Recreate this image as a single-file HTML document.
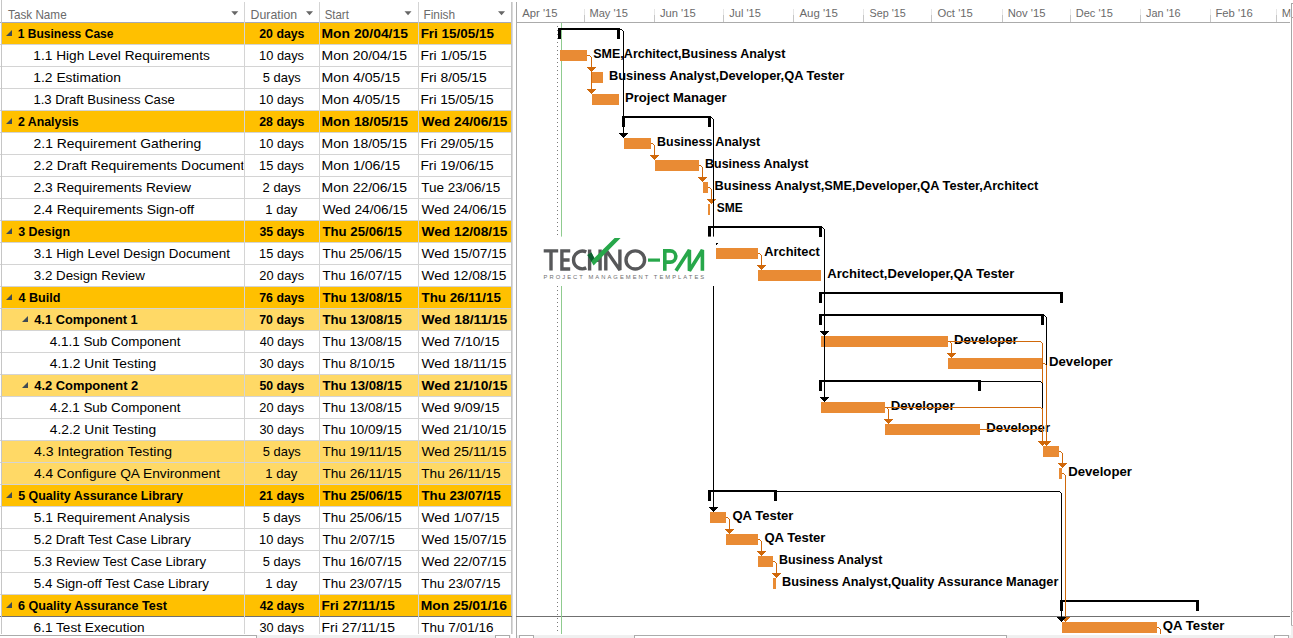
<!DOCTYPE html>
<html><head><meta charset="utf-8"><title>Gantt</title>
<style>html,body{margin:0;padding:0;background:#fff;}body{width:1293px;height:638px;overflow:hidden;}svg{display:block;}text{font-family:"Liberation Sans",sans-serif;white-space:pre;}</style>
</head><body>
<svg width="1293" height="638" viewBox="0 0 1293 638" font-family="Liberation Sans, sans-serif">
<defs><clipPath id="cn"><rect x="2" y="0" width="241.4" height="638"/></clipPath><clipPath id="cc"><rect x="517" y="0" width="773.4" height="638"/></clipPath></defs>
<rect x="0" y="0" width="1293" height="638" fill="#fff"/>
<g id="table" shape-rendering="crispEdges">
<rect x="2" y="22" width="509" height="22" fill="#FFC000"/>
<rect x="2" y="110" width="509" height="22" fill="#FFC000"/>
<rect x="2" y="220" width="509" height="22" fill="#FFC000"/>
<rect x="2" y="286" width="509" height="22" fill="#FFC000"/>
<rect x="2" y="308" width="509" height="22" fill="#FFD966"/>
<rect x="2" y="374" width="509" height="22" fill="#FFD966"/>
<rect x="2" y="440" width="509" height="22" fill="#FFD966"/>
<rect x="2" y="462" width="509" height="22" fill="#FFD966"/>
<rect x="2" y="484" width="509" height="22" fill="#FFC000"/>
<rect x="2" y="594" width="509" height="22" fill="#FFC000"/>
<rect x="0" y="22" width="511" height="1" fill="#A6A9B6"/>
<rect x="0" y="44" width="511" height="1" fill="#D4D4D4"/>
<rect x="0" y="66" width="511" height="1" fill="#D4D4D4"/>
<rect x="0" y="88" width="511" height="1" fill="#D4D4D4"/>
<rect x="0" y="110" width="511" height="1" fill="#D4D4D4"/>
<rect x="0" y="132" width="511" height="1" fill="#D4D4D4"/>
<rect x="0" y="154" width="511" height="1" fill="#D4D4D4"/>
<rect x="0" y="176" width="511" height="1" fill="#D4D4D4"/>
<rect x="0" y="198" width="511" height="1" fill="#D4D4D4"/>
<rect x="0" y="220" width="511" height="1" fill="#D4D4D4"/>
<rect x="0" y="242" width="511" height="1" fill="#D4D4D4"/>
<rect x="0" y="264" width="511" height="1" fill="#D4D4D4"/>
<rect x="0" y="286" width="511" height="1" fill="#D4D4D4"/>
<rect x="0" y="308" width="511" height="1" fill="#D4D4D4"/>
<rect x="0" y="330" width="511" height="1" fill="#D4D4D4"/>
<rect x="0" y="352" width="511" height="1" fill="#D4D4D4"/>
<rect x="0" y="374" width="511" height="1" fill="#D4D4D4"/>
<rect x="0" y="396" width="511" height="1" fill="#D4D4D4"/>
<rect x="0" y="418" width="511" height="1" fill="#D4D4D4"/>
<rect x="0" y="440" width="511" height="1" fill="#D4D4D4"/>
<rect x="0" y="462" width="511" height="1" fill="#D4D4D4"/>
<rect x="0" y="484" width="511" height="1" fill="#D4D4D4"/>
<rect x="0" y="506" width="511" height="1" fill="#D4D4D4"/>
<rect x="0" y="528" width="511" height="1" fill="#D4D4D4"/>
<rect x="0" y="550" width="511" height="1" fill="#D4D4D4"/>
<rect x="0" y="572" width="511" height="1" fill="#D4D4D4"/>
<rect x="0" y="594" width="511" height="1" fill="#D4D4D4"/>
<rect x="0" y="616" width="512" height="1" fill="#707070"/>
<rect x="0" y="638" width="511" height="1" fill="#D4D4D4"/>
<rect x="1" y="0" width="1" height="634" fill="#C6C6C6"/>
<rect x="244" y="2" width="1" height="632" fill="#D4D4D4"/>
<rect x="319" y="2" width="1" height="632" fill="#D4D4D4"/>
<rect x="418" y="2" width="1" height="632" fill="#D4D4D4"/>
<rect x="511" y="2" width="1" height="632" fill="#C4C4C4"/>
<rect x="512" y="2" width="1" height="632" fill="#DADADA"/>
<rect x="516" y="2" width="1" height="636" fill="#ABABAB"/>
<rect x="500" y="616" width="12" height="1" fill="#707070"/>
</g>
<path d="M231.3,11.2 h7 l-3.5,4 z" fill="#666"/>
<path d="M306,11.2 h7 l-3.5,4 z" fill="#666"/>
<path d="M404.5,11.2 h7 l-3.5,4 z" fill="#666"/>
<path d="M498,11.2 h7 l-3.5,4 z" fill="#666"/>
<path d="M6,36 h6 v-6 z" fill="#3F4A54"/>
<path d="M6,124 h6 v-6 z" fill="#3F4A54"/>
<path d="M6,234 h6 v-6 z" fill="#3F4A54"/>
<path d="M6,300 h6 v-6 z" fill="#3F4A54"/>
<path d="M22,322 h6 v-6 z" fill="#3F4A54"/>
<path d="M22,388 h6 v-6 z" fill="#3F4A54"/>
<path d="M6,498 h6 v-6 z" fill="#3F4A54"/>
<path d="M6,608 h6 v-6 z" fill="#3F4A54"/>
<g id="chart">
<g shape-rendering="crispEdges">
<rect x="516" y="22" width="774" height="1" fill="#ABABAB"/>
<rect x="584" y="9" width="1" height="6" fill="#E6E6E6"/><rect x="584" y="15" width="1" height="7" fill="#C6C6C6"/>
<rect x="654" y="9" width="1" height="6" fill="#E6E6E6"/><rect x="654" y="15" width="1" height="7" fill="#C6C6C6"/>
<rect x="723" y="9" width="1" height="6" fill="#E6E6E6"/><rect x="723" y="15" width="1" height="7" fill="#C6C6C6"/>
<rect x="793" y="9" width="1" height="6" fill="#E6E6E6"/><rect x="793" y="15" width="1" height="7" fill="#C6C6C6"/>
<rect x="863" y="9" width="1" height="6" fill="#E6E6E6"/><rect x="863" y="15" width="1" height="7" fill="#C6C6C6"/>
<rect x="931" y="9" width="1" height="6" fill="#E6E6E6"/><rect x="931" y="15" width="1" height="7" fill="#C6C6C6"/>
<rect x="1002" y="9" width="1" height="6" fill="#E6E6E6"/><rect x="1002" y="15" width="1" height="7" fill="#C6C6C6"/>
<rect x="1070" y="9" width="1" height="6" fill="#E6E6E6"/><rect x="1070" y="15" width="1" height="7" fill="#C6C6C6"/>
<rect x="1140" y="9" width="1" height="6" fill="#E6E6E6"/><rect x="1140" y="15" width="1" height="7" fill="#C6C6C6"/>
<rect x="1210" y="9" width="1" height="6" fill="#E6E6E6"/><rect x="1210" y="15" width="1" height="7" fill="#C6C6C6"/>
<rect x="1276" y="9" width="1" height="6" fill="#E6E6E6"/><rect x="1276" y="15" width="1" height="7" fill="#C6C6C6"/>
<rect x="516" y="616" width="774" height="1" fill="#707070"/>
</g>
<line x1="557.5" y1="26" x2="557.5" y2="634" stroke="#7a7a7a" stroke-width="1" stroke-dasharray="1,3" shape-rendering="crispEdges"/>
<rect x="561" y="23" width="1" height="611" fill="#8FCB8F" shape-rendering="crispEdges"/>
<g shape-rendering="crispEdges">
<path d="M558,28 H620 V39 h-3 V30 H561 V39 h-3 z" fill="#000"/>
<rect x="560" y="50" width="27" height="11" fill="#E98B34"/>
<rect x="592" y="72" width="11" height="11" fill="#E98B34"/>
<rect x="592" y="94" width="27" height="11" fill="#E98B34"/>
<path d="M622,116 H711 V127 h-3 V118 H625 V127 h-3 z" fill="#000"/>
<rect x="624" y="138" width="27" height="11" fill="#E98B34"/>
<rect x="655" y="160" width="44" height="11" fill="#E98B34"/>
<rect x="703" y="182" width="5" height="11" fill="#E98B34"/>
<rect x="708" y="204" width="2" height="11" fill="#E98B34"/>
<path d="M708,226 H822 V237 h-3 V228 H711 V237 h-3 z" fill="#000"/>
<rect x="716" y="248" width="42" height="11" fill="#E98B34"/>
<rect x="758" y="270" width="63" height="11" fill="#E98B34"/>
<path d="M819,292 H1063 V303 h-3 V294 H822 V303 h-3 z" fill="#000"/>
<path d="M819,314 H1044 V325 h-3 V316 H822 V325 h-3 z" fill="#000"/>
<rect x="821" y="336" width="127" height="11" fill="#E98B34"/>
<rect x="948" y="358" width="94" height="11" fill="#E98B34"/>
<path d="M819,380 H981 V391 h-3 V382 H822 V391 h-3 z" fill="#000"/>
<rect x="821" y="402" width="64" height="11" fill="#E98B34"/>
<rect x="885" y="424" width="95" height="11" fill="#E98B34"/>
<rect x="1043" y="446" width="16" height="11" fill="#E98B34"/>
<rect x="1059" y="468" width="3" height="11" fill="#E98B34"/>
<path d="M708,490 H777 V501 h-3 V492 H711 V501 h-3 z" fill="#000"/>
<rect x="710" y="512" width="16" height="11" fill="#E98B34"/>
<rect x="726" y="534" width="32" height="11" fill="#E98B34"/>
<rect x="758" y="556" width="15" height="11" fill="#E98B34"/>
<rect x="773" y="578" width="3" height="11" fill="#E98B34"/>
<path d="M1060,600 H1199 V611 h-3 V602 H1063 V611 h-3 z" fill="#000"/>
<rect x="1062" y="622" width="95" height="11" fill="#E98B34"/>
</g>
<text transform="translate(17.65,37.80) scale(0.9286,1)" font-size="13" font-weight="bold">1 Business Case</text>
<text transform="translate(259.27,37.80) scale(0.9472,1)" font-size="13" font-weight="bold">20 days</text>
<text transform="translate(321.53,37.80) scale(1.0684,1)" font-size="13" font-weight="bold">Mon 20/04/15</text>
<text transform="translate(420.66,37.80) scale(1.0339,1)" font-size="13" font-weight="bold">Fri 15/05/15</text>
<text transform="translate(33.34,59.80) scale(1.0533,1)" font-size="13">1.1 High Level Requirements</text>
<text transform="translate(259.10,59.80) scale(0.9884,1)" font-size="13">10 days</text>
<text transform="translate(321.61,59.80) scale(1.0755,1)" font-size="13">Mon 20/04/15</text>
<text transform="translate(420.42,59.80) scale(1.0668,1)" font-size="13">Fri 1/05/15</text>
<text transform="translate(33.34,81.80) scale(1.0639,1)" font-size="13">1.2 Estimation</text>
<text transform="translate(262.75,81.80) scale(0.9950,1)" font-size="13">5 days</text>
<text transform="translate(321.60,81.80) scale(1.0865,1)" font-size="13">Mon 4/05/15</text>
<text transform="translate(420.42,81.80) scale(1.0668,1)" font-size="13">Fri 8/05/15</text>
<text transform="translate(33.38,103.80) scale(1.0098,1)" font-size="13">1.3 Draft Business Case</text>
<text transform="translate(259.10,103.80) scale(0.9884,1)" font-size="13">10 days</text>
<text transform="translate(321.60,103.80) scale(1.0865,1)" font-size="13">Mon 4/05/15</text>
<text transform="translate(420.43,103.80) scale(1.0563,1)" font-size="13">Fri 15/05/15</text>
<text transform="translate(18.01,125.80) scale(0.9498,1)" font-size="13" font-weight="bold">2 Analysis</text>
<text transform="translate(259.27,125.80) scale(0.9472,1)" font-size="13" font-weight="bold">28 days</text>
<text transform="translate(321.53,125.80) scale(1.0684,1)" font-size="13" font-weight="bold">Mon 18/05/15</text>
<text transform="translate(421.50,125.80) scale(1.0555,1)" font-size="13" font-weight="bold">Wed 24/06/15</text>
<text transform="translate(33.55,147.80) scale(1.0703,1)" font-size="13">2.1 Requirement Gathering</text>
<text transform="translate(259.10,147.80) scale(0.9884,1)" font-size="13">10 days</text>
<text transform="translate(321.61,147.80) scale(1.0755,1)" font-size="13">Mon 18/05/15</text>
<text transform="translate(420.43,147.80) scale(1.0563,1)" font-size="13">Fri 29/05/15</text>
<g clip-path="url(#cn)"><text transform="translate(33.55,169.80) scale(1.0697,1)" font-size="13">2.2 Draft Requirements Document</text></g>
<text transform="translate(259.10,169.80) scale(0.9884,1)" font-size="13">15 days</text>
<text transform="translate(321.60,169.80) scale(1.0865,1)" font-size="13">Mon 1/06/15</text>
<text transform="translate(420.43,169.80) scale(1.0563,1)" font-size="13">Fri 19/06/15</text>
<text transform="translate(33.55,191.80) scale(1.0587,1)" font-size="13">2.3 Requirements Review</text>
<text transform="translate(262.54,191.80) scale(1.0004,1)" font-size="13">2 days</text>
<text transform="translate(321.61,191.80) scale(1.0755,1)" font-size="13">Mon 22/06/15</text>
<text transform="translate(421.29,191.80) scale(1.0384,1)" font-size="13">Tue 23/06/15</text>
<text transform="translate(33.55,213.80) scale(1.0664,1)" font-size="13">2.4 Requirements Sign-off</text>
<text transform="translate(265.33,213.80) scale(1.0100,1)" font-size="13">1 day</text>
<text transform="translate(322.70,213.80) scale(1.0538,1)" font-size="13">Wed 24/06/15</text>
<text transform="translate(421.50,213.80) scale(1.0538,1)" font-size="13">Wed 24/06/15</text>
<text transform="translate(18.21,235.80) scale(0.9578,1)" font-size="13" font-weight="bold">3 Design</text>
<text transform="translate(259.46,235.80) scale(0.9431,1)" font-size="13" font-weight="bold">35 days</text>
<text transform="translate(322.40,235.80) scale(1.0178,1)" font-size="13" font-weight="bold">Thu 25/06/15</text>
<text transform="translate(421.50,235.80) scale(1.0555,1)" font-size="13" font-weight="bold">Wed 12/08/15</text>
<text transform="translate(33.78,257.80) scale(1.0333,1)" font-size="13">3.1 High Level Design Document</text>
<text transform="translate(259.10,257.80) scale(0.9884,1)" font-size="13">15 days</text>
<text transform="translate(322.49,257.80) scale(1.0344,1)" font-size="13">Thu 25/06/15</text>
<text transform="translate(421.50,257.80) scale(1.0538,1)" font-size="13">Wed 15/07/15</text>
<text transform="translate(33.78,279.80) scale(1.0265,1)" font-size="13">3.2 Design Review</text>
<text transform="translate(259.30,279.80) scale(0.9839,1)" font-size="13">20 days</text>
<text transform="translate(322.49,279.80) scale(1.0344,1)" font-size="13">Thu 16/07/15</text>
<text transform="translate(421.50,279.80) scale(1.0538,1)" font-size="13">Wed 12/08/15</text>
<text transform="translate(18.40,301.80) scale(0.9693,1)" font-size="13" font-weight="bold">4 Build</text>
<text transform="translate(259.27,301.80) scale(0.9472,1)" font-size="13" font-weight="bold">76 days</text>
<text transform="translate(322.40,301.80) scale(1.0178,1)" font-size="13" font-weight="bold">Thu 13/08/15</text>
<text transform="translate(421.50,301.80) scale(1.0273,1)" font-size="13" font-weight="bold">Thu 26/11/15</text>
<text transform="translate(34.20,323.80) scale(0.9893,1)" font-size="13" font-weight="bold">4.1 Component 1</text>
<text transform="translate(259.27,323.80) scale(0.9472,1)" font-size="13" font-weight="bold">70 days</text>
<text transform="translate(322.40,323.80) scale(1.0178,1)" font-size="13" font-weight="bold">Thu 13/08/15</text>
<text transform="translate(421.50,323.80) scale(1.0649,1)" font-size="13" font-weight="bold">Wed 18/11/15</text>
<text transform="translate(49.79,345.80) scale(1.0339,1)" font-size="13">4.1.1 Sub Component</text>
<text transform="translate(259.70,345.80) scale(0.9750,1)" font-size="13">40 days</text>
<text transform="translate(322.49,345.80) scale(1.0344,1)" font-size="13">Thu 13/08/15</text>
<text transform="translate(421.50,345.80) scale(1.0623,1)" font-size="13">Wed 7/10/15</text>
<text transform="translate(49.78,367.80) scale(1.0622,1)" font-size="13">4.1.2 Unit Testing</text>
<text transform="translate(259.50,367.80) scale(0.9794,1)" font-size="13">30 days</text>
<text transform="translate(322.49,367.80) scale(1.0414,1)" font-size="13">Thu 8/10/15</text>
<text transform="translate(421.50,367.80) scale(1.0667,1)" font-size="13">Wed 18/11/15</text>
<text transform="translate(34.20,389.80) scale(0.9941,1)" font-size="13" font-weight="bold">4.2 Component 2</text>
<text transform="translate(259.46,389.80) scale(0.9431,1)" font-size="13" font-weight="bold">50 days</text>
<text transform="translate(322.40,389.80) scale(1.0178,1)" font-size="13" font-weight="bold">Thu 13/08/15</text>
<text transform="translate(421.50,389.80) scale(1.0555,1)" font-size="13" font-weight="bold">Wed 21/10/15</text>
<text transform="translate(49.79,411.80) scale(1.0339,1)" font-size="13">4.2.1 Sub Component</text>
<text transform="translate(259.30,411.80) scale(0.9839,1)" font-size="13">20 days</text>
<text transform="translate(322.49,411.80) scale(1.0344,1)" font-size="13">Thu 13/08/15</text>
<text transform="translate(421.50,411.80) scale(1.0623,1)" font-size="13">Wed 9/09/15</text>
<text transform="translate(49.78,433.80) scale(1.0622,1)" font-size="13">4.2.2 Unit Testing</text>
<text transform="translate(259.50,433.80) scale(0.9794,1)" font-size="13">30 days</text>
<text transform="translate(322.49,433.80) scale(1.0344,1)" font-size="13">Thu 10/09/15</text>
<text transform="translate(421.50,433.80) scale(1.0538,1)" font-size="13">Wed 21/10/15</text>
<text transform="translate(33.98,455.80) scale(1.0828,1)" font-size="13">4.3 Integration Testing</text>
<text transform="translate(262.75,455.80) scale(0.9950,1)" font-size="13">5 days</text>
<text transform="translate(322.49,455.80) scale(1.0478,1)" font-size="13">Thu 19/11/15</text>
<text transform="translate(421.50,455.80) scale(1.0667,1)" font-size="13">Wed 25/11/15</text>
<text transform="translate(33.99,477.80) scale(1.0555,1)" font-size="13">4.4 Configure QA Environment</text>
<text transform="translate(265.33,477.80) scale(1.0100,1)" font-size="13">1 day</text>
<text transform="translate(322.49,477.80) scale(1.0478,1)" font-size="13">Thu 26/11/15</text>
<text transform="translate(421.29,477.80) scale(1.0478,1)" font-size="13">Thu 26/11/15</text>
<text transform="translate(18.21,499.80) scale(0.9579,1)" font-size="13" font-weight="bold">5 Quality Assurance Library</text>
<text transform="translate(259.27,499.80) scale(0.9472,1)" font-size="13" font-weight="bold">21 days</text>
<text transform="translate(322.40,499.80) scale(1.0178,1)" font-size="13" font-weight="bold">Thu 25/06/15</text>
<text transform="translate(421.50,499.80) scale(1.0178,1)" font-size="13" font-weight="bold">Thu 23/07/15</text>
<text transform="translate(33.77,521.80) scale(1.0596,1)" font-size="13">5.1 Requirement Analysis</text>
<text transform="translate(262.75,521.80) scale(0.9950,1)" font-size="13">5 days</text>
<text transform="translate(322.49,521.80) scale(1.0344,1)" font-size="13">Thu 25/06/15</text>
<text transform="translate(421.50,521.80) scale(1.0623,1)" font-size="13">Wed 1/07/15</text>
<text transform="translate(33.79,543.80) scale(1.0187,1)" font-size="13">5.2 Draft Test Case Library</text>
<text transform="translate(259.10,543.80) scale(0.9884,1)" font-size="13">10 days</text>
<text transform="translate(322.49,543.80) scale(1.0414,1)" font-size="13">Thu 2/07/15</text>
<text transform="translate(421.50,543.80) scale(1.0538,1)" font-size="13">Wed 15/07/15</text>
<text transform="translate(33.79,565.80) scale(1.0210,1)" font-size="13">5.3 Review Test Case Library</text>
<text transform="translate(262.75,565.80) scale(0.9950,1)" font-size="13">5 days</text>
<text transform="translate(322.49,565.80) scale(1.0344,1)" font-size="13">Thu 16/07/15</text>
<text transform="translate(421.50,565.80) scale(1.0538,1)" font-size="13">Wed 22/07/15</text>
<text transform="translate(33.78,587.80) scale(1.0263,1)" font-size="13">5.4 Sign-off Test Case Library</text>
<text transform="translate(265.33,587.80) scale(1.0100,1)" font-size="13">1 day</text>
<text transform="translate(322.49,587.80) scale(1.0344,1)" font-size="13">Thu 23/07/15</text>
<text transform="translate(421.29,587.80) scale(1.0344,1)" font-size="13">Thu 23/07/15</text>
<text transform="translate(18.01,609.80) scale(0.9688,1)" font-size="13" font-weight="bold">6 Quality Assurance Test</text>
<text transform="translate(259.65,609.80) scale(0.9390,1)" font-size="13" font-weight="bold">42 days</text>
<text transform="translate(321.55,609.80) scale(1.0446,1)" font-size="13" font-weight="bold">Fri 27/11/15</text>
<text transform="translate(420.63,609.80) scale(1.0684,1)" font-size="13" font-weight="bold">Mon 25/01/16</text>
<text transform="translate(33.56,631.80) scale(1.0487,1)" font-size="13">6.1 Test Execution</text>
<text transform="translate(259.50,631.80) scale(0.9794,1)" font-size="13">30 days</text>
<text transform="translate(321.61,631.80) scale(1.0715,1)" font-size="13">Fri 27/11/15</text>
<text transform="translate(421.29,631.80) scale(1.0414,1)" font-size="13">Thu 7/01/16</text>
<text transform="translate(8.02,18.70) scale(0.9022,1)" font-size="13" fill="#6a6a6a">Task Name</text>
<text transform="translate(250.54,18.70) scale(0.9474,1)" font-size="13" fill="#6a6a6a">Duration</text>
<text transform="translate(324.64,18.70) scale(0.8822,1)" font-size="13" fill="#6a6a6a">Start</text>
<text transform="translate(423.47,18.70) scale(0.9140,1)" font-size="13" fill="#6a6a6a">Finish</text>
<text transform="translate(522.30,16.60) scale(1.0237,1)" font-size="11" fill="#6a6a6a">Apr '15</text>
<text transform="translate(589.39,16.60) scale(1.0094,1)" font-size="11" fill="#6a6a6a">May '15</text>
<text transform="translate(659.95,16.60) scale(1.0185,1)" font-size="11" fill="#6a6a6a">Jun '15</text>
<text transform="translate(729.35,16.60) scale(1.0005,1)" font-size="11" fill="#6a6a6a">Jul '15</text>
<text transform="translate(799.40,16.60) scale(1.0398,1)" font-size="11" fill="#6a6a6a">Aug '15</text>
<text transform="translate(869.56,16.60) scale(0.9807,1)" font-size="11" fill="#6a6a6a">Sep '15</text>
<text transform="translate(937.49,16.60) scale(1.0242,1)" font-size="11" fill="#6a6a6a">Oct '15</text>
<text transform="translate(1007.68,16.60) scale(1.0243,1)" font-size="11" fill="#6a6a6a">Nov '15</text>
<text transform="translate(1075.80,16.60) scale(1.0018,1)" font-size="11" fill="#6a6a6a">Dec '15</text>
<text transform="translate(1145.95,16.60) scale(0.9881,1)" font-size="11" fill="#6a6a6a">Jan '16</text>
<text transform="translate(1215.48,16.60) scale(1.0235,1)" font-size="11" fill="#6a6a6a">Feb '16</text>
<g clip-path="url(#cc)"><text transform="translate(1281.65,16.60) scale(1.0581,1)" font-size="11" fill="#6a6a6a">Mar '16</text></g>
<text transform="translate(593.25,57.80) scale(1.0021,1)" font-size="12.5" font-weight="bold">SME,Architect,Business Analyst</text>
<text transform="translate(608.88,79.80) scale(1.0298,1)" font-size="12.5" font-weight="bold">Business Analyst,Developer,QA Tester</text>
<text transform="translate(625.07,101.80) scale(1.0437,1)" font-size="12.5" font-weight="bold">Project Manager</text>
<text transform="translate(657.10,145.80) scale(0.9943,1)" font-size="12.5" font-weight="bold">Business Analyst</text>
<text transform="translate(705.10,167.80) scale(0.9963,1)" font-size="12.5" font-weight="bold">Business Analyst</text>
<text transform="translate(714.58,189.80) scale(1.0249,1)" font-size="12.5" font-weight="bold">Business Analyst,SME,Developer,QA Tester,Architect</text>
<text transform="translate(716.66,211.80) scale(0.9609,1)" font-size="12.5" font-weight="bold">SME</text>
<text transform="translate(764.29,255.80) scale(1.0261,1)" font-size="12.5" font-weight="bold">Architect</text>
<text transform="translate(827.29,277.80) scale(1.0458,1)" font-size="12.5" font-weight="bold">Architect,Developer,QA Tester</text>
<text transform="translate(953.96,343.80) scale(1.0560,1)" font-size="12.5" font-weight="bold">Developer</text>
<text transform="translate(1048.96,365.80) scale(1.0560,1)" font-size="12.5" font-weight="bold">Developer</text>
<text transform="translate(890.76,409.80) scale(1.0560,1)" font-size="12.5" font-weight="bold">Developer</text>
<text transform="translate(986.36,431.80) scale(1.0543,1)" font-size="12.5" font-weight="bold">Developer</text>
<text transform="translate(1068.16,475.80) scale(1.0560,1)" font-size="12.5" font-weight="bold">Developer</text>
<text transform="translate(732.38,519.80) scale(1.0473,1)" font-size="12.5" font-weight="bold">QA Tester</text>
<text transform="translate(764.38,541.80) scale(1.0473,1)" font-size="12.5" font-weight="bold">QA Tester</text>
<text transform="translate(779.00,563.80) scale(0.9963,1)" font-size="12.5" font-weight="bold">Business Analyst</text>
<text transform="translate(781.98,585.80) scale(1.0196,1)" font-size="12.5" font-weight="bold">Business Analyst,Quality Assurance Manager</text>
<text transform="translate(1162.77,629.80) scale(1.0577,1)" font-size="12.5" font-weight="bold">QA Tester</text>
<g shape-rendering="crispEdges">
<rect x="587" y="55" width="3" height="1" fill="#D0680A"/>
<rect x="590" y="56" width="1" height="1" fill="#D0680A"/>
<rect x="591" y="57" width="1" height="37" fill="#D0680A"/>
<rect x="587" y="67" width="9" height="1" fill="#D0680A"/>
<rect x="588" y="68" width="7" height="1" fill="#D0680A"/>
<rect x="589" y="69" width="5" height="1" fill="#D0680A"/>
<rect x="590" y="70" width="3" height="1" fill="#D0680A"/>
<rect x="591" y="71" width="1" height="1" fill="#D0680A"/>
<rect x="587" y="89" width="9" height="1" fill="#D0680A"/>
<rect x="588" y="90" width="7" height="1" fill="#D0680A"/>
<rect x="589" y="91" width="5" height="1" fill="#D0680A"/>
<rect x="590" y="92" width="3" height="1" fill="#D0680A"/>
<rect x="591" y="93" width="1" height="1" fill="#D0680A"/>
<rect x="651" y="143" width="2" height="1" fill="#D0680A"/>
<rect x="653" y="144" width="1" height="1" fill="#D0680A"/>
<rect x="654" y="145" width="1" height="15" fill="#D0680A"/>
<rect x="650" y="155" width="9" height="1" fill="#D0680A"/>
<rect x="651" y="156" width="7" height="1" fill="#D0680A"/>
<rect x="652" y="157" width="5" height="1" fill="#D0680A"/>
<rect x="653" y="158" width="3" height="1" fill="#D0680A"/>
<rect x="654" y="159" width="1" height="1" fill="#D0680A"/>
<rect x="699" y="165" width="2" height="1" fill="#D0680A"/>
<rect x="701" y="166" width="1" height="1" fill="#D0680A"/>
<rect x="702" y="167" width="1" height="15" fill="#D0680A"/>
<rect x="698" y="177" width="9" height="1" fill="#D0680A"/>
<rect x="699" y="178" width="7" height="1" fill="#D0680A"/>
<rect x="700" y="179" width="5" height="1" fill="#D0680A"/>
<rect x="701" y="180" width="3" height="1" fill="#D0680A"/>
<rect x="702" y="181" width="1" height="1" fill="#D0680A"/>
<rect x="708" y="187" width="2" height="1" fill="#D0680A"/>
<rect x="710" y="188" width="1" height="1" fill="#D0680A"/>
<rect x="711" y="189" width="1" height="15" fill="#D0680A"/>
<rect x="707" y="199" width="9" height="1" fill="#D0680A"/>
<rect x="708" y="200" width="7" height="1" fill="#D0680A"/>
<rect x="709" y="201" width="5" height="1" fill="#D0680A"/>
<rect x="710" y="202" width="3" height="1" fill="#D0680A"/>
<rect x="711" y="203" width="1" height="1" fill="#D0680A"/>
<rect x="758" y="253" width="2" height="1" fill="#D0680A"/>
<rect x="760" y="254" width="1" height="1" fill="#D0680A"/>
<rect x="761" y="255" width="1" height="15" fill="#D0680A"/>
<rect x="757" y="265" width="9" height="1" fill="#D0680A"/>
<rect x="758" y="266" width="7" height="1" fill="#D0680A"/>
<rect x="759" y="267" width="5" height="1" fill="#D0680A"/>
<rect x="760" y="268" width="3" height="1" fill="#D0680A"/>
<rect x="761" y="269" width="1" height="1" fill="#D0680A"/>
<rect x="948" y="341" width="2" height="1" fill="#D0680A"/>
<rect x="950" y="342" width="1" height="1" fill="#D0680A"/>
<rect x="951" y="343" width="1" height="15" fill="#D0680A"/>
<rect x="947" y="353" width="9" height="1" fill="#D0680A"/>
<rect x="948" y="354" width="7" height="1" fill="#D0680A"/>
<rect x="949" y="355" width="5" height="1" fill="#D0680A"/>
<rect x="950" y="356" width="3" height="1" fill="#D0680A"/>
<rect x="951" y="357" width="1" height="1" fill="#D0680A"/>
<rect x="948" y="341" width="93" height="1" fill="#D0680A"/>
<rect x="1041" y="342" width="1" height="1" fill="#D0680A"/>
<rect x="1042" y="343" width="1" height="103" fill="#D0680A"/>
<rect x="1038" y="441" width="9" height="1" fill="#D0680A"/>
<rect x="1039" y="442" width="7" height="1" fill="#D0680A"/>
<rect x="1040" y="443" width="5" height="1" fill="#D0680A"/>
<rect x="1041" y="444" width="3" height="1" fill="#D0680A"/>
<rect x="1042" y="445" width="1" height="1" fill="#D0680A"/>
<rect x="1043" y="363" width="2" height="1" fill="#D0680A"/>
<rect x="1045" y="364" width="1" height="1" fill="#D0680A"/>
<rect x="1046" y="365" width="1" height="81" fill="#D0680A"/>
<rect x="1042" y="441" width="9" height="1" fill="#D0680A"/>
<rect x="1043" y="442" width="7" height="1" fill="#D0680A"/>
<rect x="1044" y="443" width="5" height="1" fill="#D0680A"/>
<rect x="1045" y="444" width="3" height="1" fill="#D0680A"/>
<rect x="1046" y="445" width="1" height="1" fill="#D0680A"/>
<rect x="885" y="407" width="2" height="1" fill="#D0680A"/>
<rect x="887" y="408" width="1" height="1" fill="#D0680A"/>
<rect x="888" y="409" width="1" height="15" fill="#D0680A"/>
<rect x="884" y="419" width="9" height="1" fill="#D0680A"/>
<rect x="885" y="420" width="7" height="1" fill="#D0680A"/>
<rect x="886" y="421" width="5" height="1" fill="#D0680A"/>
<rect x="887" y="422" width="3" height="1" fill="#D0680A"/>
<rect x="888" y="423" width="1" height="1" fill="#D0680A"/>
<rect x="885" y="407" width="156" height="1" fill="#D0680A"/>
<rect x="1041" y="408" width="1" height="1" fill="#D0680A"/>
<rect x="1042" y="409" width="1" height="11" fill="#D0680A"/>
<rect x="980" y="429" width="61" height="1" fill="#D0680A"/>
<rect x="1041" y="430" width="1" height="1" fill="#D0680A"/>
<rect x="1042" y="431" width="1" height="9" fill="#D0680A"/>
<rect x="1059" y="451" width="2" height="1" fill="#D0680A"/>
<rect x="1061" y="452" width="1" height="1" fill="#D0680A"/>
<rect x="1062" y="453" width="1" height="15" fill="#D0680A"/>
<rect x="1058" y="463" width="9" height="1" fill="#D0680A"/>
<rect x="1059" y="464" width="7" height="1" fill="#D0680A"/>
<rect x="1060" y="465" width="5" height="1" fill="#D0680A"/>
<rect x="1061" y="466" width="3" height="1" fill="#D0680A"/>
<rect x="1062" y="467" width="1" height="1" fill="#D0680A"/>
<rect x="1062" y="473" width="2" height="1" fill="#D0680A"/>
<rect x="1064" y="474" width="1" height="1" fill="#D0680A"/>
<rect x="1065" y="475" width="1" height="147" fill="#D0680A"/>
<rect x="1061" y="617" width="9" height="1" fill="#D0680A"/>
<rect x="1062" y="618" width="7" height="1" fill="#D0680A"/>
<rect x="1063" y="619" width="5" height="1" fill="#D0680A"/>
<rect x="1064" y="620" width="3" height="1" fill="#D0680A"/>
<rect x="1065" y="621" width="1" height="1" fill="#D0680A"/>
<rect x="726" y="517" width="2" height="1" fill="#D0680A"/>
<rect x="728" y="518" width="1" height="1" fill="#D0680A"/>
<rect x="729" y="519" width="1" height="15" fill="#D0680A"/>
<rect x="725" y="529" width="9" height="1" fill="#D0680A"/>
<rect x="726" y="530" width="7" height="1" fill="#D0680A"/>
<rect x="727" y="531" width="5" height="1" fill="#D0680A"/>
<rect x="728" y="532" width="3" height="1" fill="#D0680A"/>
<rect x="729" y="533" width="1" height="1" fill="#D0680A"/>
<rect x="758" y="539" width="2" height="1" fill="#D0680A"/>
<rect x="760" y="540" width="1" height="1" fill="#D0680A"/>
<rect x="761" y="541" width="1" height="15" fill="#D0680A"/>
<rect x="757" y="551" width="9" height="1" fill="#D0680A"/>
<rect x="758" y="552" width="7" height="1" fill="#D0680A"/>
<rect x="759" y="553" width="5" height="1" fill="#D0680A"/>
<rect x="760" y="554" width="3" height="1" fill="#D0680A"/>
<rect x="761" y="555" width="1" height="1" fill="#D0680A"/>
<rect x="773" y="561" width="2" height="1" fill="#D0680A"/>
<rect x="775" y="562" width="1" height="1" fill="#D0680A"/>
<rect x="776" y="563" width="1" height="15" fill="#D0680A"/>
<rect x="772" y="573" width="9" height="1" fill="#D0680A"/>
<rect x="773" y="574" width="7" height="1" fill="#D0680A"/>
<rect x="774" y="575" width="5" height="1" fill="#D0680A"/>
<rect x="775" y="576" width="3" height="1" fill="#D0680A"/>
<rect x="776" y="577" width="1" height="1" fill="#D0680A"/>
<rect x="1157" y="627" width="2" height="1" fill="#D0680A"/>
<rect x="1159" y="628" width="1" height="1" fill="#D0680A"/>
<rect x="1160" y="629" width="1" height="6" fill="#D0680A"/>
<rect x="620" y="29" width="2" height="1" fill="#000"/>
<rect x="622" y="30" width="1" height="1" fill="#000"/>
<rect x="623" y="31" width="1" height="107" fill="#000"/>
<rect x="619" y="133" width="9" height="1" fill="#000"/>
<rect x="620" y="134" width="7" height="1" fill="#000"/>
<rect x="621" y="135" width="5" height="1" fill="#000"/>
<rect x="622" y="136" width="3" height="1" fill="#000"/>
<rect x="623" y="137" width="1" height="1" fill="#000"/>
<rect x="711" y="117" width="1" height="1" fill="#000"/>
<rect x="712" y="118" width="1" height="1" fill="#000"/>
<rect x="713" y="119" width="1" height="393" fill="#000"/>
<rect x="709" y="243" width="9" height="1" fill="#000"/>
<rect x="710" y="244" width="7" height="1" fill="#000"/>
<rect x="711" y="245" width="5" height="1" fill="#000"/>
<rect x="712" y="246" width="3" height="1" fill="#000"/>
<rect x="713" y="247" width="1" height="1" fill="#000"/>
<rect x="709" y="507" width="9" height="1" fill="#000"/>
<rect x="710" y="508" width="7" height="1" fill="#000"/>
<rect x="711" y="509" width="5" height="1" fill="#000"/>
<rect x="712" y="510" width="3" height="1" fill="#000"/>
<rect x="713" y="511" width="1" height="1" fill="#000"/>
<rect x="822" y="227" width="1" height="1" fill="#000"/>
<rect x="823" y="228" width="1" height="1" fill="#000"/>
<rect x="824" y="229" width="1" height="173" fill="#000"/>
<rect x="820" y="331" width="9" height="1" fill="#000"/>
<rect x="821" y="332" width="7" height="1" fill="#000"/>
<rect x="822" y="333" width="5" height="1" fill="#000"/>
<rect x="823" y="334" width="3" height="1" fill="#000"/>
<rect x="824" y="335" width="1" height="1" fill="#000"/>
<rect x="820" y="397" width="9" height="1" fill="#000"/>
<rect x="821" y="398" width="7" height="1" fill="#000"/>
<rect x="822" y="399" width="5" height="1" fill="#000"/>
<rect x="823" y="400" width="3" height="1" fill="#000"/>
<rect x="824" y="401" width="1" height="1" fill="#000"/>
<rect x="1044" y="315" width="1" height="1" fill="#000"/>
<rect x="1045" y="316" width="1" height="1" fill="#000"/>
<rect x="1046" y="317" width="1" height="48" fill="#000"/>
<rect x="981" y="381" width="60" height="1" fill="#000"/>
<rect x="1041" y="382" width="1" height="1" fill="#000"/>
<rect x="1042" y="383" width="1" height="25" fill="#000"/>
<rect x="777" y="491" width="283" height="1" fill="#000"/>
<rect x="1060" y="492" width="1" height="1" fill="#000"/>
<rect x="1061" y="493" width="1" height="129" fill="#000"/>
<rect x="1057" y="617" width="9" height="1" fill="#000"/>
<rect x="1058" y="618" width="7" height="1" fill="#000"/>
<rect x="1059" y="619" width="5" height="1" fill="#000"/>
<rect x="1060" y="620" width="3" height="1" fill="#000"/>
<rect x="1061" y="621" width="1" height="1" fill="#000"/>
</g>
<g id="logo">
<rect x="536" y="236.6" width="180" height="49.4" fill="#fff"/>
<path d="M543.7,250.9 H558.2 M551,249.4 V270.5" fill="none" stroke="#57585A" stroke-width="3.4" />
<path d="M570.2,250.9 H561.9 V269.0 H570.2 M561.9,259.95 H569.6" fill="none" stroke="#57585A" stroke-width="3.4" />
<path d="M586.28,252.00 A8.85,8.85 0 1 0 586.28,267.90" fill="none" stroke="#57585A" stroke-width="3.4" />
<path d="M589.6,249.4 V270.5 M600.1,249.4 V270.5 M589.6,260.25 H600.1" fill="none" stroke="#57585A" stroke-width="3.4" />
<path d="M605.8,270.5 V249.8 L619.9,270.1 V249.4" fill="none" stroke="#57585A" stroke-width="3.4" stroke-linejoin="bevel"/>
<ellipse cx="635.3" cy="259.95" rx="9.30" ry="9.05" fill="none" stroke="#57585A" stroke-width="3.4"/>
<rect x="648" y="258.5" width="12" height="3.2" fill="#27A74A"/>
<path d="M664.8,270.8 V250.9 H670.3 a5.5,5.6 0 0 1 0,11.2 H664.8" fill="none" stroke="#27A74A" stroke-width="3.6" />
<path d="M676,270.8 L689.4,250.0 V270.8 L702.4,250.0 V270.8" fill="none" stroke="#27A74A" stroke-width="3.6" stroke-linejoin="miter" stroke-miterlimit="2"/>
<path d="M587.4,255.0 L593.6,265.4 L620.6,238.0 L614.6,238.0 L594.3,258.0 L591.4,252.6 z" fill="#27A74A"/>
<path d="M587.4,255.0 L591.3,261.5 L594.3,258.0 L591.4,252.6 z" fill="#0E5C30"/>
<text x="543.6" y="278.8" font-size="5.8" fill="#6e6e6e" textLength="160.6" lengthAdjust="spacing">PROJECT MANAGEMENT TEMPLATES</text>
</g>
</g>
</g>
<g shape-rendering="crispEdges">
<rect x="0" y="634" width="1293" height="1" fill="#fff"/>
<rect x="0" y="635" width="1293" height="3" fill="#F0F0F0"/>
<rect x="0" y="635" width="257" height="3" fill="#fff"/>
<rect x="0" y="635" width="257" height="1" fill="#ABABAB"/>
<rect x="256" y="635" width="1" height="3" fill="#ABABAB"/>
<rect x="495" y="635" width="15" height="3" fill="#fff"/>
<rect x="495" y="635" width="15" height="1" fill="#ABABAB"/>
<rect x="495" y="635" width="1" height="3" fill="#ABABAB"/>
<rect x="509" y="635" width="1" height="3" fill="#ABABAB"/>
<rect x="511" y="634" width="6" height="4" fill="#fff"/>
<rect x="516" y="634" width="1" height="4" fill="#ABABAB"/>
<rect x="519" y="635" width="15" height="3" fill="#fff"/>
<rect x="519" y="635" width="15" height="1" fill="#ABABAB"/>
<rect x="519" y="635" width="1" height="3" fill="#ABABAB"/>
<rect x="533" y="635" width="1" height="3" fill="#ABABAB"/>
<rect x="634" y="635" width="373" height="3" fill="#fff"/>
<rect x="634" y="635" width="373" height="1" fill="#ABABAB"/>
<rect x="634" y="635" width="1" height="3" fill="#ABABAB"/>
<rect x="1006" y="635" width="1" height="3" fill="#ABABAB"/>
<rect x="1274" y="635" width="15" height="3" fill="#fff"/>
<rect x="1274" y="635" width="15" height="1" fill="#ABABAB"/>
<rect x="1274" y="635" width="1" height="3" fill="#ABABAB"/>
<rect x="1288" y="635" width="1" height="3" fill="#ABABAB"/>
<rect x="1291" y="3" width="2" height="635" fill="#F0F0F0"/>
<rect x="1292" y="4" width="1" height="622" fill="#fff"/>
<rect x="1291" y="3" width="1" height="623" fill="#A6A6A6"/>
<rect x="1291" y="3" width="2" height="1" fill="#A6A6A6"/>
<rect x="1291" y="17" width="2" height="1" fill="#A6A6A6"/>
<rect x="1291" y="611" width="2" height="1" fill="#C0C0C0"/>
<rect x="1291" y="625" width="2" height="1" fill="#C0C0C0"/>
</g>
</svg>
</body></html>
